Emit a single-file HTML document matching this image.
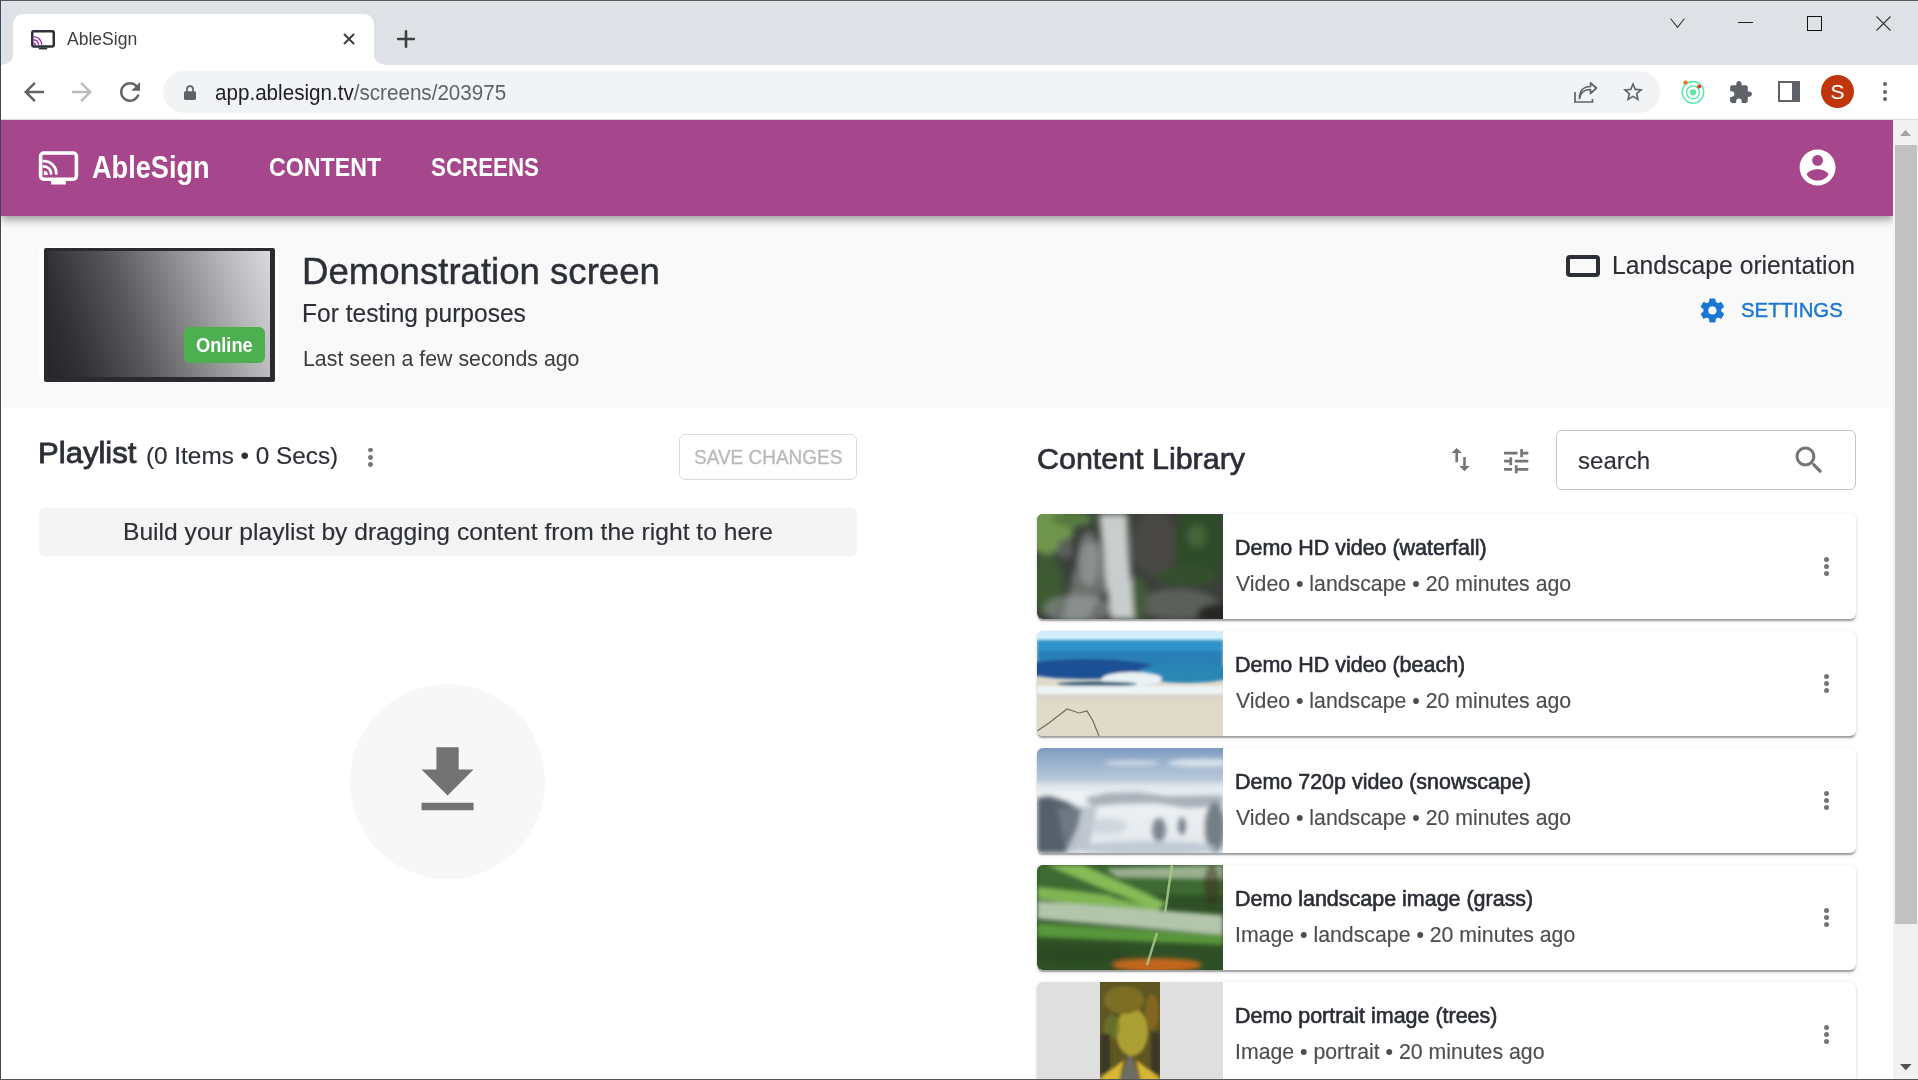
<!DOCTYPE html>
<html><head><meta charset="utf-8">
<style>
*{box-sizing:border-box;margin:0;padding:0}
html,body{width:1918px;height:1080px;overflow:hidden;background:#fff;font-family:"Liberation Sans",sans-serif}
.a{position:absolute}
.t{position:absolute;white-space:nowrap;line-height:1;transform-origin:0 0}
svg{position:absolute;overflow:visible}
</style></head><body>
<div class="a" style="left:0;top:0;width:1918px;height:65px;background:#dee1e6"></div>
<div class="a" style="left:0;top:0;width:1918px;height:1px;background:#5a5a5a"></div>
<div class="a" style="left:13px;top:14px;width:361px;height:51px;background:#fff;border-radius:10px 10px 0 0"></div>
<div class="a" style="left:3px;top:54px;width:10px;height:11px;background:radial-gradient(circle at 0 0,#dee1e6 10px,#fff 10.5px)"></div>
<div class="a" style="left:374px;top:54px;width:10px;height:11px;background:radial-gradient(circle at 100% 0,#dee1e6 10px,#fff 10.5px)"></div>
<div class="a" style="left:0;top:65px;width:1918px;height:55px;background:#fff"></div>
<div class="a" style="left:1px;top:119px;width:1917px;height:1px;background:#dadce0"></div>
<div class="a" style="left:163px;top:71px;width:1497px;height:42px;background:#f1f3f4;border-radius:21px"></div>

<!-- favicon -->
<svg style="left:31px;top:30px" width="24" height="20" viewBox="0 0 24 20">
 <rect x="1.25" y="1.25" width="21.5" height="15.2" rx="1.2" fill="none" stroke="#2d3138" stroke-width="2.5"/>
 <rect x="7.8" y="17.6" width="8.4" height="1.8" fill="#2d3138"/>
 <path d="M2.6 6.6a8.2 8.2 0 0 1 8.2 8.2" fill="none" stroke="#9a22ae" stroke-width="1.4"/>
 <path d="M2.6 9.7a5.1 5.1 0 0 1 5.1 5.1" fill="none" stroke="#9a22ae" stroke-width="1.4"/>
 <path d="M2.6 12.4a2.4 2.4 0 0 1 2.4 2.4H2.6z" fill="#9a22ae"/>
</svg>
<!-- tab close -->
<svg style="left:343px;top:33px" width="12" height="12" viewBox="0 0 12 12"><path d="M1 1L11 11M11 1L1 11" stroke="#3c4043" stroke-width="2"/></svg>
<!-- new tab -->
<svg style="left:397px;top:30px" width="18" height="18" viewBox="0 0 18 18"><path d="M9 1.2V16.8M1.2 9H16.8" stroke="#3c4043" stroke-width="2.6" stroke-linecap="round"/></svg>
<!-- window controls -->
<svg style="left:1670px;top:18px" width="15" height="10" viewBox="0 0 15 10"><path d="M0.5 0.5L7.5 9.3L14.5 0.5" fill="none" stroke="#333" stroke-width="1.1"/></svg>
<div class="a" style="left:1738px;top:22px;width:15px;height:1px;background:#222"></div>
<div class="a" style="left:1807px;top:16px;width:15px;height:15px;border:1.2px solid #111"></div>
<svg style="left:1876px;top:16px" width="15" height="15" viewBox="0 0 15 15"><path d="M0.5 0.5L14.5 14.5M14.5 0.5L0.5 14.5" stroke="#333" stroke-width="1.1"/></svg>
<!-- back / fwd / reload -->
<svg style="left:19px;top:77px" width="30" height="30" viewBox="0 0 24 24"><path fill="#5f6368" d="M20 11H7.83l5.59-5.59L12 4l-8 8 8 8 1.41-1.41L7.83 13H20v-2z"/></svg>
<svg style="left:67px;top:77px" width="30" height="30" viewBox="0 0 24 24"><path fill="#b9bbbe" d="M4 11h12.17l-5.59-5.59L12 4l8 8-8 8-1.41-1.41L16.17 13H4v-2z"/></svg>
<svg style="left:115px;top:77px" width="30" height="30" viewBox="0 0 24 24"><path fill="#5f6368" d="M17.65 6.35C16.2 4.9 14.21 4 12 4c-4.42 0-7.99 3.58-7.99 8s3.57 8 7.99 8c3.73 0 6.84-2.55 7.73-6h-2.08c-.82 2.33-3.04 4-5.65 4-3.31 0-6-2.69-6-6s2.69-6 6-6c1.66 0 3.14.69 4.22 1.78L13 11h7V4l-2.35 2.35z"/></svg>
<!-- lock -->
<svg style="left:184px;top:85px" width="12" height="15" viewBox="0 0 12 15">
 <path d="M3 6.5V4.2a3 3 0 0 1 6 0V6.5" fill="none" stroke="#5f6368" stroke-width="1.8"/>
 <rect x="0" y="6.2" width="12" height="8.8" rx="1.4" fill="#5f6368"/>
</svg>
<!-- share -->
<svg style="left:1574px;top:82px" width="24" height="21" viewBox="0 0 24 21">
 <path d="M1 10V20H18.5V17" fill="none" stroke="#5f6368" stroke-width="1.7"/>
 <path d="M5.5 16.5C6.5 10.5 10.5 7.5 16.5 7.5V11.5L22.5 6L16.5 1V4.5C9.5 4.5 5.5 9 5.5 16.5Z" fill="none" stroke="#5f6368" stroke-width="1.7" stroke-linejoin="round"/>
</svg>
<!-- star -->
<svg style="left:1621px;top:80px" width="24" height="24" viewBox="0 0 24 24"><path fill="#5f6368" d="M22 9.24l-7.19-.62L12 2 9.19 8.63 2 9.24l5.46 4.73L5.82 21 12 17.27 18.18 21l-1.63-7.03L22 9.24zM12 15.4l-3.76 2.27 1-4.28-3.32-2.88 4.38-.38L12 6.1l1.71 4.04 4.38.38-3.32 2.88 1 4.28L12 15.4z"/></svg>
<!-- extension circle -->
<svg style="left:1681px;top:80px" width="24" height="24" viewBox="0 0 24 24">
 <circle cx="12" cy="12.3" r="10.8" fill="none" stroke="#4de8a8" stroke-width="1.3"/>
 <circle cx="12" cy="12.3" r="6.5" fill="none" stroke="#4de8a8" stroke-width="1.3"/>
 <circle cx="12" cy="12.3" r="3.1" fill="#5fe3a0"/>
 <circle cx="4.5" cy="2.6" r="2.2" fill="#f26b2a"/>
 <circle cx="18.2" cy="6.5" r="2.1" fill="#e8402a"/>
</svg>
<!-- puzzle -->
<svg style="left:1728px;top:80px" width="25" height="25" viewBox="0 0 24 24"><path fill="#5f6368" d="M20.5 11H19V7c0-1.1-.9-2-2-2h-4V3.5C13 2.12 11.88 1 10.5 1S8 2.12 8 3.5V5H4c-1.1 0-1.99.9-1.99 2v3.8H3.5c1.49 0 2.7 1.21 2.7 2.7s-1.21 2.7-2.7 2.7H2V20c0 1.1.9 2 2 2h3.8v-1.5c0-1.49 1.21-2.7 2.7-2.7 1.49 0 2.7 1.21 2.7 2.7V22H17c1.1 0 2-.9 2-2v-4h1.5c1.38 0 2.5-1.12 2.5-2.5S21.88 11 20.5 11z"/></svg>
<!-- sidebar -->
<svg style="left:1778px;top:81px" width="22" height="21" viewBox="0 0 22 21">
 <rect x="1" y="1" width="20" height="19" fill="none" stroke="#5f6368" stroke-width="2"/>
 <rect x="14" y="1" width="7" height="19" fill="#5f6368"/>
</svg>
<!-- profile -->
<div class="a" style="left:1821px;top:75px;width:33px;height:33px;border-radius:50%;background:#bf360c"></div>
<div class="t" style="left:1830.5px;top:80.5px;font-size:21px;color:#fff">S</div>
<!-- chrome kebab -->
<div class="a" style="left:1882.90px;top:82.30px;width:4.2px;height:4.2px;border-radius:50%;background:#5f6368"></div><div class="a" style="left:1882.90px;top:89.70px;width:4.2px;height:4.2px;border-radius:50%;background:#5f6368"></div><div class="a" style="left:1882.90px;top:97.10px;width:4.2px;height:4.2px;border-radius:50%;background:#5f6368"></div>

<div class="a" style="left:1px;top:216px;width:1892px;height:192px;background:#f9f9f9"></div>
<div class="a" style="left:1px;top:120px;width:1892px;height:96px;background:#a6468c;clip-path:inset(0 0 -30px 0);box-shadow:0 3px 6px -1.5px rgba(0,0,0,.2),0 6px 7.5px 0 rgba(0,0,0,.14),0 1.5px 15px 0 rgba(0,0,0,.12)"></div>

<!-- logo -->
<svg style="left:38px;top:151px" width="41" height="34" viewBox="0 0 41 34">
 <rect x="2.6" y="2.0" width="35.8" height="26.2" rx="3.2" fill="none" stroke="#fff" stroke-width="3.6"/>
 <rect x="13.1" y="29.5" width="14.7" height="4" fill="#fff"/>
 <path d="M5.9 10.2a12.4 12.4 0 0 1 12.4 12.4" fill="none" stroke="#fff" stroke-width="2.8" stroke-linecap="round"/>
 <path d="M5.9 15.4a7.2 7.2 0 0 1 7.2 7.2" fill="none" stroke="#fff" stroke-width="2.8" stroke-linecap="round"/>
 <path d="M5.9 20.0a4 4 0 0 1 4 4H5.9z" fill="#fff"/>
</svg>
<!-- account -->
<svg style="left:1796px;top:145.7px" width="43.2" height="43.2" viewBox="0 0 24 24"><path fill="#fff" d="M12 2C6.48 2 2 6.48 2 12s4.48 10 10 10 10-4.48 10-10S17.52 2 12 2zm0 3c1.66 0 3 1.34 3 3s-1.34 3-3 3-3-1.34-3-3 1.34-3 3-3zm0 14.2c-2.5 0-4.71-1.28-6-3.22.03-1.99 4-3.08 6-3.08 1.99 0 5.97 1.09 6 3.08-1.29 1.94-3.5 3.22-6 3.22z"/></svg>

<!-- screen thumbnail -->
<div class="a" style="left:39px;top:247px;width:239px;height:136px;background:#fff;border-radius:6px"></div>
<div class="a" style="left:44px;top:248px;width:231px;height:134px;background:#2a2b2e;border-radius:2px"></div>
<div class="a" style="left:48px;top:251px;width:222px;height:126px;background:linear-gradient(72deg,#242527 0%,#333335 15%,#58585a 38%,#848486 58%,#b0b0b2 78%,#d9dadc 100%)"></div>
<div class="a" style="left:184px;top:327px;width:81px;height:36px;background:#4caf50;border-radius:6px"></div>

<!-- landscape icon -->
<div class="a" style="left:1566px;top:255px;width:34px;height:22px;border:4.6px solid #2c2f36;border-radius:4px"></div>
<!-- gear -->
<svg style="left:1698.2px;top:296.3px" width="28.8" height="28.8" viewBox="0 0 24 24"><path fill="#1976d2" d="M19.43 12.98c.04-.32.07-.64.07-.98s-.03-.66-.07-.98l2.11-1.65c.19-.15.24-.42.12-.64l-2-3.46c-.12-.22-.39-.3-.61-.22l-2.49 1c-.52-.4-1.08-.73-1.690-.98l-.38-2.65C14.46 2.18 14.25 2 14 2h-4c-.25 0-.46.18-.49.42l-.38 2.65c-.61.25-1.17.59-1.69.98l-2.49-1c-.23-.09-.49 0-.61.22l-2 3.46c-.13.22-.07.49.12.64l2.11 1.65c-.04.32-.07.65-.07.98s.03.66.07.98l-2.11 1.650c-.19.15-.24.42-.12.64l2 3.46c.12.22.39.3.61.22l2.49-1c.52.4 1.08.73 1.69.98l.38 2.65c.03.24.24.42.49.42h4c.25 0 .46-.18.49-.42l.38-2.65c.61-.25 1.17-.59 1.69-.98l2.49 1c.23.09.49 0 .61-.22l2-3.46c.12-.22.07-.49-.12-.64l-2.11-1.65zM12 15.5c-1.93 0-3.5-1.57-3.5-3.5s1.57-3.5 3.5-3.5 3.5 1.57 3.5 3.5-1.57 3.5-3.5 3.5z"/></svg>

<!-- playlist kebab -->
<div class="a" style="left:368.30px;top:447.70px;width:4.8px;height:4.8px;border-radius:50%;background:#757575"></div><div class="a" style="left:368.30px;top:455.00px;width:4.8px;height:4.8px;border-radius:50%;background:#757575"></div><div class="a" style="left:368.30px;top:462.30px;width:4.8px;height:4.8px;border-radius:50%;background:#757575"></div>
<!-- save changes button -->
<div class="a" style="left:679px;top:434px;width:178px;height:46px;border:1.4px solid #dcdcdc;border-radius:6px"></div>
<!-- info bar -->
<div class="a" style="left:39px;top:508px;width:818px;height:48px;background:#f4f4f4;border-radius:6px"></div>
<!-- drop circle -->
<div class="a" style="left:350px;top:684px;width:195px;height:195px;border-radius:50%;background:#f7f7f7"></div>
<svg style="left:403.4px;top:735.7px" width="89.1" height="89.1" viewBox="0 0 24 24"><path fill="#737373" d="M19 9h-4V3H9v6H5l7 7 7-7zM5 18v2h14v-2H5z"/></svg>

<!-- library icons -->
<svg style="left:1445.3px;top:444.1px" width="31.2" height="31.2" viewBox="0 0 24 24"><path fill="#757575" d="M16 17.01V10h-2v7.01h-3L15 21l4-3.99h-3zM9 3L5 6.99h3V14h2V6.99h3L9 3z"/></svg>
<svg style="left:1499.85px;top:444.65px" width="32.4" height="32.4" viewBox="0 0 24 24"><path fill="#757575" d="M3 17v2h6v-2H3zM3 5v2h10V5H3zm10 16v-2h8v-2h-8v-2h-2v6h2zM7 9v2H3v2h4v2h2V9H7zm14 4v-2H11v2h10zm-6-4h2V7h4V5h-4V3h-2v6z"/></svg>
<div class="a" style="left:1556px;top:430px;width:300px;height:60px;border:1.4px solid #c4c4c4;border-radius:6px"></div>
<svg style="left:1790.6px;top:442.4px" width="36.5" height="36.5" viewBox="0 0 24 24"><path fill="#757575" d="M15.5 14h-.79l-.28-.27C15.41 12.59 16 11.11 16 9.5 16 5.91 13.09 3 9.5 3S3 5.91 3 9.5 5.91 16 9.5 16c1.61 0 3.09-.59 4.23-1.57l.27.28v.79l5 4.99L20.49 19l-4.99-5zm-6 0C7.01 14 5 11.99 5 9.5S7.01 5 9.5 5 14 7.01 14 9.5 11.99 14 9.5 14z"/></svg>

<div class="a" style="left:1037px;top:514px;width:819px;height:105px;background:#fff;border-radius:6px;box-shadow:0 3px 1.5px -1.5px rgba(0,0,0,.2),0 1.5px 1.5px 0 rgba(0,0,0,.14),0 1.5px 4.5px 0 rgba(0,0,0,.12);overflow:hidden"><div class="a" style="left:0;top:0;width:186px;height:105px;overflow:hidden"><svg style="left:0;top:0" width="186" height="105" viewBox="0 0 186 105"><defs><filter id="bw1" x="-20%" y="-20%" width="140%" height="140%"><feGaussianBlur stdDeviation="3"/></filter></defs><rect width="186" height="105" fill="#3b413a"/><g filter="url(#bw1)"><ellipse cx="10" cy="14" rx="26" ry="26" fill="#6f964e"/><ellipse cx="35" cy="5" rx="20" ry="8" fill="#56793f"/><ellipse cx="10" cy="70" rx="16" ry="30" fill="#3d5a33"/><ellipse cx="40" cy="42" rx="16" ry="20" fill="#3a3c3b"/><ellipse cx="28" cy="35" rx="8" ry="10" fill="#5b5f5c"/><ellipse cx="40" cy="95" rx="34" ry="14" fill="#8e9391" opacity=".6"/><ellipse cx="52" cy="45" rx="10" ry="28" fill="#a7acab" opacity=".45"/><ellipse cx="118" cy="30" rx="22" ry="32" fill="#524d48" opacity=".6"/><ellipse cx="165" cy="30" rx="28" ry="40" fill="#2f4b2b"/><ellipse cx="160" cy="22" rx="10" ry="12" fill="#446338"/><ellipse cx="150" cy="62" rx="30" ry="10" fill="#36502f"/><ellipse cx="140" cy="90" rx="40" ry="15" fill="#5b605a"/><ellipse cx="100" cy="85" rx="10" ry="22" fill="#44593a"/><ellipse cx="75" cy="62" rx="12" ry="16" fill="#3a3d3c"/><ellipse cx="180" cy="100" rx="20" ry="10" fill="#252724"/><polygon points="62,0 90,0 92,40 97,105 74,105 68,60" fill="#e2e6e6" opacity=".85"/><polygon points="45,30 62,28 72,70 50,105 25,105" fill="#c4c9c8" opacity=".35"/></g></svg></div></div><div class="a" style="left:1823.90px;top:556.80px;width:5.0px;height:5.0px;border-radius:50%;background:#757575"></div><div class="a" style="left:1823.90px;top:564.10px;width:5.0px;height:5.0px;border-radius:50%;background:#757575"></div><div class="a" style="left:1823.90px;top:571.40px;width:5.0px;height:5.0px;border-radius:50%;background:#757575"></div><div class="a" style="left:1037px;top:631px;width:819px;height:105px;background:#fff;border-radius:6px;box-shadow:0 3px 1.5px -1.5px rgba(0,0,0,.2),0 1.5px 1.5px 0 rgba(0,0,0,.14),0 1.5px 4.5px 0 rgba(0,0,0,.12);overflow:hidden"><div class="a" style="left:0;top:0;width:186px;height:105px;overflow:hidden"><svg style="left:0;top:0" width="186" height="105" viewBox="0 0 186 105"><defs><filter id="bw2" x="-20%" y="-20%" width="140%" height="140%"><feGaussianBlur stdDeviation="1.8"/></filter></defs><rect width="186" height="105" fill="#e0dacb"/><rect width="186" height="10" fill="#d2eefa"/><g filter="url(#bw2)"><rect y="9" width="186" height="14" fill="#2d93c8"/><rect y="20" width="186" height="20" fill="#2a7fb8"/><ellipse cx="50" cy="38" rx="70" ry="10" fill="#1f4f94"/><ellipse cx="150" cy="42" rx="50" ry="10" fill="#2b86b5"/><ellipse cx="95" cy="48" rx="30" ry="7" fill="#e9f2f4"/><ellipse cx="60" cy="53" rx="40" ry="2.5" fill="#2a5a78"/><rect y="55" width="186" height="9" fill="#eef4f6"/><rect y="63" width="186" height="6" fill="#d7d4c9"/></g><path d="M0 100 L12 92 L30 78 L42 82 L50 80 L56 90 L62 105" fill="none" stroke="#5a5040" stroke-width="1.2" opacity=".8"/></svg></div></div><div class="a" style="left:1823.90px;top:673.80px;width:5.0px;height:5.0px;border-radius:50%;background:#757575"></div><div class="a" style="left:1823.90px;top:681.10px;width:5.0px;height:5.0px;border-radius:50%;background:#757575"></div><div class="a" style="left:1823.90px;top:688.40px;width:5.0px;height:5.0px;border-radius:50%;background:#757575"></div><div class="a" style="left:1037px;top:748px;width:819px;height:105px;background:#fff;border-radius:6px;box-shadow:0 3px 1.5px -1.5px rgba(0,0,0,.2),0 1.5px 1.5px 0 rgba(0,0,0,.14),0 1.5px 4.5px 0 rgba(0,0,0,.12);overflow:hidden"><div class="a" style="left:0;top:0;width:186px;height:105px;overflow:hidden"><svg style="left:0;top:0" width="186" height="105" viewBox="0 0 186 105"><defs><filter id="bw3" x="-20%" y="-20%" width="140%" height="140%"><feGaussianBlur stdDeviation="2.6"/></filter></defs><defs><linearGradient id="sg" x1="0" y1="0" x2="0" y2="1"><stop offset="0" stop-color="#7e9cc0"/><stop offset=".3" stop-color="#b9c9da"/><stop offset=".36" stop-color="#dde5ec"/><stop offset=".44" stop-color="#eef2f5"/><stop offset="1" stop-color="#e3e8ec"/></linearGradient></defs><rect width="186" height="105" fill="url(#sg)"/><g filter="url(#bw3)"><ellipse cx="165" cy="15" rx="35" ry="4" fill="#e3eaf0" opacity=".9"/><ellipse cx="95" cy="15" rx="28" ry="2.5" fill="#e3eaf0" opacity=".8"/><polygon points="0,50 12,48 30,54 44,62 40,80 28,105 0,105" fill="#56616c"/><polygon points="48,50 70,45 100,44 130,48 186,47 186,58 150,60 120,55 80,56 55,58" fill="#7a8591" opacity=".6"/><polygon points="20,60 60,58 52,100 30,105" fill="#8995a2" opacity=".45"/><ellipse cx="122" cy="82" rx="7" ry="12" fill="#5b6671" opacity=".75"/><ellipse cx="145" cy="78" rx="4" ry="9" fill="#5e6974" opacity=".8"/><ellipse cx="178" cy="80" rx="10" ry="25" fill="#56616c" opacity=".8"/><ellipse cx="110" cy="100" rx="70" ry="7" fill="#b8c3ce" opacity=".8"/><ellipse cx="70" cy="78" rx="20" ry="8" fill="#c0cad4" opacity=".6"/></g></svg></div></div><div class="a" style="left:1823.90px;top:790.80px;width:5.0px;height:5.0px;border-radius:50%;background:#757575"></div><div class="a" style="left:1823.90px;top:798.10px;width:5.0px;height:5.0px;border-radius:50%;background:#757575"></div><div class="a" style="left:1823.90px;top:805.40px;width:5.0px;height:5.0px;border-radius:50%;background:#757575"></div><div class="a" style="left:1037px;top:865px;width:819px;height:105px;background:#fff;border-radius:6px;box-shadow:0 3px 1.5px -1.5px rgba(0,0,0,.2),0 1.5px 1.5px 0 rgba(0,0,0,.14),0 1.5px 4.5px 0 rgba(0,0,0,.12);overflow:hidden"><div class="a" style="left:0;top:0;width:186px;height:105px;overflow:hidden"><svg style="left:0;top:0" width="186" height="105" viewBox="0 0 186 105"><defs><filter id="bw4" x="-20%" y="-20%" width="140%" height="140%"><feGaussianBlur stdDeviation="2.2"/></filter></defs><rect width="186" height="105" fill="#2f5026"/><g filter="url(#bw4)"><rect y="0" width="186" height="30" fill="#3e6a33"/><polygon points="0,22 70,30 120,44 110,50 0,34" fill="#7fb652"/><polygon points="10,0 45,0 130,38 120,46" fill="#86bb58"/><polygon points="70,4 186,0 186,14 80,12" fill="#a9bca0" opacity=".85"/><polygon points="0,36 186,50 186,70 0,54" fill="#b3c6ac"/><polygon points="0,58 186,70 186,80 0,72" fill="#58973a"/><ellipse cx="45" cy="90" rx="50" ry="8" fill="#2a4822"/><ellipse cx="120" cy="100" rx="45" ry="7" fill="#c0661f"/><ellipse cx="175" cy="20" rx="8" ry="20" fill="#3a2a1a" opacity=".5"/></g><path d="M135 0 L128 48 M120 68 L110 100" stroke="#a9cc8e" stroke-width="2.5" opacity=".85"/></svg></div></div><div class="a" style="left:1823.90px;top:907.80px;width:5.0px;height:5.0px;border-radius:50%;background:#757575"></div><div class="a" style="left:1823.90px;top:915.10px;width:5.0px;height:5.0px;border-radius:50%;background:#757575"></div><div class="a" style="left:1823.90px;top:922.40px;width:5.0px;height:5.0px;border-radius:50%;background:#757575"></div><div class="a" style="left:1037px;top:982px;width:819px;height:105px;background:#fff;border-radius:6px;box-shadow:0 3px 1.5px -1.5px rgba(0,0,0,.2),0 1.5px 1.5px 0 rgba(0,0,0,.14),0 1.5px 4.5px 0 rgba(0,0,0,.12);overflow:hidden"><div class="a" style="left:0;top:0;width:186px;height:105px;background:#dfdfdf"></div><div class="a" style="left:63px;top:0;width:60px;height:100px;overflow:hidden"><svg style="left:0;top:0" width="60" height="105" viewBox="0 0 60 105"><defs><filter id="bw5" x="-20%" y="-20%" width="140%" height="140%"><feGaussianBlur stdDeviation="1.8"/></filter></defs><rect width="60" height="105" fill="#5f5622"/><g filter="url(#bw5)"><ellipse cx="32" cy="50" rx="16" ry="24" fill="#b9ab36" opacity=".85"/><ellipse cx="24" cy="18" rx="20" ry="14" fill="#7c6e24"/><ellipse cx="12" cy="45" rx="8" ry="12" fill="#6c7a30" opacity=".7"/><ellipse cx="52" cy="30" rx="7" ry="18" fill="#9a6e1e" opacity=".6"/><rect x="0" y="52" width="10" height="40" fill="#3a3828"/><rect x="51" y="50" width="9" height="42" fill="#3a3828"/><polygon points="28,74 32,74 42,105 18,105" fill="#6d6c66"/><polygon points="0,96 24,78 18,105 0,105" fill="#d6b630"/><polygon points="60,96 36,78 42,105 60,105" fill="#d6b630"/></g></svg></div></div><div class="a" style="left:1823.90px;top:1024.80px;width:5.0px;height:5.0px;border-radius:50%;background:#757575"></div><div class="a" style="left:1823.90px;top:1032.10px;width:5.0px;height:5.0px;border-radius:50%;background:#757575"></div><div class="a" style="left:1823.90px;top:1039.40px;width:5.0px;height:5.0px;border-radius:50%;background:#757575"></div>
<div class="t" style="left:67.40px;top:30.00px;font-size:18.90px;font-weight:400;color:#3c4043;transform:scaleX(0.9273);">AbleSign</div><div class="t" style="left:214.50px;top:82.00px;font-size:22.00px;font-weight:400;color:#202124;transform:scaleX(0.9374);">app.ablesign.tv<span style="color:#5f6368">/screens/203975</span></div><div class="t" style="left:92.00px;top:153.00px;font-size:30.81px;font-weight:700;color:#ffffff;transform:scaleX(0.8811);">AbleSign</div><div class="t" style="left:269.07px;top:156.00px;font-size:24.85px;font-weight:700;color:#ffffff;transform:scaleX(0.9336);">CONTENT</div><div class="t" style="left:430.60px;top:156.00px;font-size:24.85px;font-weight:700;color:#ffffff;transform:scaleX(0.8985);">SCREENS</div><div class="t" style="left:301.89px;top:254.00px;font-size:36.48px;font-weight:400;color:#2c2f36;transform:scaleX(1.0032);-webkit-text-stroke:0.45px #2c2f36;">Demonstration screen</div><div class="t" style="left:301.92px;top:302.00px;font-size:24.85px;font-weight:400;color:#2c2f36;transform:scaleX(0.9886);-webkit-text-stroke:0.15px #2c2f36;">For testing purposes</div><div class="t" style="left:302.52px;top:348.00px;font-size:21.80px;font-weight:400;color:#3d3d3d;transform:scaleX(0.9793);">Last seen a few seconds ago</div><div class="t" style="left:1612.42px;top:253.00px;font-size:25.00px;font-weight:400;color:#2c2f36;transform:scaleX(0.9876);-webkit-text-stroke:0.15px #2c2f36;">Landscape orientation</div><div class="t" style="left:1741.20px;top:299.00px;font-size:21.08px;font-weight:400;color:#1976d2;transform:scaleX(0.9651);-webkit-text-stroke:0.4px #1976d2;">SETTINGS</div><div class="t" style="left:196.20px;top:335.00px;font-size:20.20px;font-weight:700;color:#ffffff;transform:scaleX(0.9028);">Online</div><div class="t" style="left:37.94px;top:438.00px;font-size:30.23px;font-weight:400;color:#2c2f36;transform:scaleX(1.0284);-webkit-text-stroke:0.8px #2c2f36;">Playlist</div><div class="t" style="left:145.72px;top:444.00px;font-size:24.78px;font-weight:400;color:#2c2f36;transform:scaleX(0.9814);-webkit-text-stroke:0.15px #2c2f36;">(0 Items • 0 Secs)</div><div class="t" style="left:122.51px;top:520.00px;font-size:24.78px;font-weight:400;color:#2c2f36;transform:scaleX(0.9940);-webkit-text-stroke:0.15px #2c2f36;">Build your playlist by dragging content from the right to here</div><div class="t" style="left:694.30px;top:447.00px;font-size:20.49px;font-weight:400;color:#b9b9b9;transform:scaleX(0.9269);-webkit-text-stroke:0.35px #b9b9b9;">SAVE CHANGES</div><div class="t" style="left:1037.00px;top:443.00px;font-size:30.38px;font-weight:400;color:#2c2f36;transform:scaleX(1.0015);-webkit-text-stroke:0.7px #2c2f36;">Content Library</div><div class="t" style="left:1577.50px;top:449.00px;font-size:24.60px;font-weight:400;color:#2c2f36;transform:scaleX(0.9776);-webkit-text-stroke:0.15px #2c2f36;">search</div><div class="t" style="left:1234.89px;top:537.00px;font-size:21.22px;font-weight:400;color:#2a2d34;transform:scaleX(1.0116);-webkit-text-stroke:0.6px #2a2d34;">Demo HD video (waterfall)</div><div class="t" style="left:1235.90px;top:573.00px;font-size:21.58px;font-weight:400;color:#4d4d4d;transform:scaleX(0.9864);-webkit-text-stroke:0.15px #4d4d4d;">Video • landscape • 20 minutes ago</div><div class="t" style="left:1234.89px;top:654.00px;font-size:21.22px;font-weight:400;color:#2a2d34;transform:scaleX(1.0116);-webkit-text-stroke:0.6px #2a2d34;">Demo HD video (beach)</div><div class="t" style="left:1235.90px;top:690.00px;font-size:21.58px;font-weight:400;color:#4d4d4d;transform:scaleX(0.9864);-webkit-text-stroke:0.15px #4d4d4d;">Video • landscape • 20 minutes ago</div><div class="t" style="left:1234.89px;top:771.00px;font-size:21.22px;font-weight:400;color:#2a2d34;transform:scaleX(1.0116);-webkit-text-stroke:0.6px #2a2d34;">Demo 720p video (snowscape)</div><div class="t" style="left:1235.90px;top:807.00px;font-size:21.58px;font-weight:400;color:#4d4d4d;transform:scaleX(0.9864);-webkit-text-stroke:0.15px #4d4d4d;">Video • landscape • 20 minutes ago</div><div class="t" style="left:1234.89px;top:888.00px;font-size:21.22px;font-weight:400;color:#2a2d34;transform:scaleX(1.0116);-webkit-text-stroke:0.6px #2a2d34;">Demo landscape image (grass)</div><div class="t" style="left:1234.91px;top:924.00px;font-size:21.58px;font-weight:400;color:#4d4d4d;transform:scaleX(0.9864);-webkit-text-stroke:0.15px #4d4d4d;">Image • landscape • 20 minutes ago</div><div class="t" style="left:1234.89px;top:1005.00px;font-size:21.22px;font-weight:400;color:#2a2d34;transform:scaleX(1.0116);-webkit-text-stroke:0.6px #2a2d34;">Demo portrait image (trees)</div><div class="t" style="left:1234.91px;top:1041.00px;font-size:21.58px;font-weight:400;color:#4d4d4d;transform:scaleX(0.9864);-webkit-text-stroke:0.15px #4d4d4d;">Image • portrait • 20 minutes ago</div>
<!-- scrollbar -->
<div class="a" style="left:1893px;top:120px;width:25px;height:960px;background:#f1f1f1"></div>
<div class="a" style="left:1895px;top:145px;width:22px;height:779px;background:#c1c1c1"></div>
<svg style="left:1900px;top:129.7px" width="11" height="6" viewBox="0 0 11 6"><path d="M0 6L5.5 0L11 6z" fill="#a3a3a3"/></svg>
<svg style="left:1899.7px;top:1063.7px" width="11.6" height="6.3" viewBox="0 0 11.6 6.3"><path d="M0 0L5.8 6.3L11.6 0z" fill="#505050"/></svg>
<div class="a" style="left:0;top:0;width:1px;height:1080px;background:#3a4a5a"></div>
<div class="a" style="left:0;top:1079px;width:1918px;height:1px;background:#555"></div>
</body></html>
